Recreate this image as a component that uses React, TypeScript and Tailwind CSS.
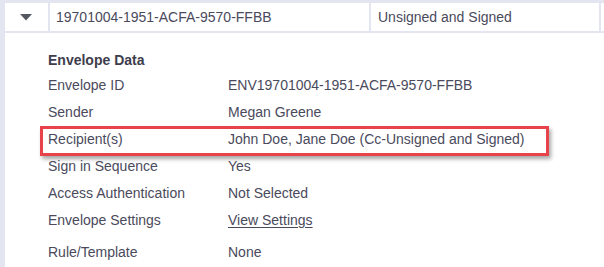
import React from "react";

const rows: { label: string; value: string; link?: boolean }[] = [
  { label: "Envelope ID", value: "ENV19701004-1951-ACFA-9570-FFBB" },
  { label: "Sender", value: "Megan Greene" },
  { label: "Recipient(s)", value: "John Doe, Jane Doe (Cc-Unsigned and Signed)" },
  { label: "Sign in Sequence", value: "Yes" },
  { label: "Access Authentication", value: "Not Selected" },
  { label: "Envelope Settings", value: "View Settings", link: true },
];

export default function App() {
  return (
    <div
      className="w-[604px] h-[267px] overflow-hidden bg-[#e3e6f0] text-[14px] text-[#4a4a5c] flex flex-col pt-[3px] pl-[5px]"
      style={{ fontFamily: '"Liberation Sans", Arial, sans-serif' }}
    >
      <div className="flex gap-[2px] h-[28px] shrink-0">
        <div className="w-[43px] bg-white flex items-center justify-center pr-[1px]">
          <svg width="12" height="7" viewBox="0 0 12 7">
            <polygon points="0,0 12,0 6,6.5" fill="#555862" />
          </svg>
        </div>
        <div className="w-[319px] bg-white flex items-center pl-[6px] whitespace-nowrap">
          19701004-1951-ACFA-9570-FFBB
        </div>
        <div className="w-[228px] bg-white flex items-center pl-[7px] whitespace-nowrap">
          Unsigned and Signed
        </div>
        <div className="flex-1 bg-white" />
      </div>
      <div className="mt-[2px] flex-1 bg-white pt-[15px] pl-[43px]">
        <div className="h-[24px] flex items-center font-bold text-[#3d3d4c]">Envelope Data</div>
        {rows.map((r) => (
          <div key={r.label} className="relative h-[27px] flex items-center whitespace-nowrap">
            <div className="w-[180px]">{r.label}</div>
            <div className={r.link ? "underline underline-offset-2" : ""}>{r.value}</div>
            {r.label === "Recipient(s)" && (
              <div className="absolute left-[-8px] top-0 w-[509px] h-[30px] border-[3px] border-[#e8434b] shadow-[2px_3px_4px_rgba(0,0,0,0.35)]" />
            )}
          </div>
        ))}
        <div className="mt-[5px] h-[27px] flex items-center whitespace-nowrap">
          <div className="w-[180px]">Rule/Template</div>
          <div>None</div>
        </div>
      </div>
    </div>
  );
}
